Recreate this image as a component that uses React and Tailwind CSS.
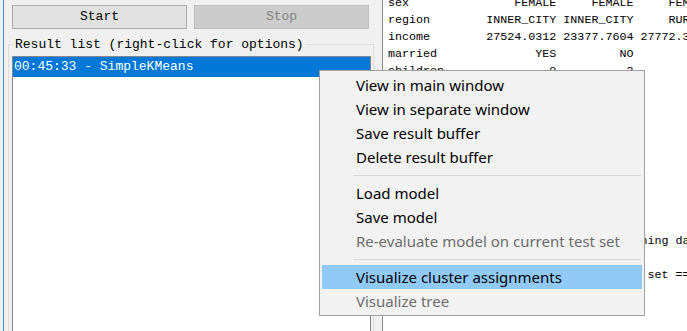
import React from 'react'

const MONO = { fontFamily: '"Liberation Mono", "DejaVu Sans Mono", monospace' }
const UI = { fontFamily: '"Noto Sans", "Open Sans", sans-serif' }

const OUTPUT = [
  'sex               FEMALE     FEMALE     FEMALE',
  'region        INNER_CITY INNER_CITY     RURAL',
  'income        27524.0312 23377.7604 27772.3808',
  'married              YES         NO',
  'children               0          2',
  '', '', '', '', '', '', '', '', '',
  'Time taken to build model (full training data) : 0.02 seconds',
  '',
  '=== Model and evaluation on training set ===',
]

const MENU = [
  { label: 'View in main window' },
  { label: 'View in separate window' },
  { label: 'Save result buffer' },
  { label: 'Delete result buffer' },
  { sep: true },
  { label: 'Load model' },
  { label: 'Save model' },
  { label: 'Re-evaluate model on current test set', disabled: true },
  { sep: true },
  { label: 'Visualize cluster assignments', active: true },
  { label: 'Visualize tree', disabled: true },
]

function ContextMenu() {
  return (
    <div className="absolute left-[319px] top-[70px] w-[326px] h-[246px] bg-[#f2f2f2] border border-[#a0a0a0] py-[2px] px-[2px]" style={UI}>
      {MENU.map((m, i) =>
        m.sep ? (
          <div key={i} className="h-[12px] flex items-center pl-[31px] pr-[1px]">
            <div className="h-px w-full bg-[#d7d7d7]" />
          </div>
        ) : (
          <div
            key={i}
            className={
              'h-[24px] flex items-center pl-[34px] text-[15px] ' +
              (m.active ? 'bg-[#91c9f7] text-black' : m.disabled ? 'text-[#6d6d6d]' : 'text-black')
            }
          >
            {m.label}
          </div>
        )
      )}
    </div>
  )
}

export default function App() {
  return (
    <div className="relative w-[687px] h-[331px] overflow-hidden bg-[#f0f0f0] flex">
      {/* left side */}
      <div className="flex-none w-[382px] pl-[3px]">
        <div className="h-full border-l border-[#4a89c8] pl-[8px] pt-[5px]">
          <div className="flex gap-[7px]" style={MONO}>
            <button className="w-[175px] h-[24px] bg-[#e1e1e1] border border-[#adadad] text-[13px] text-black">Start</button>
            <button className="w-[175px] h-[24px] bg-[#cccccc] border border-[#bfbfbf] text-[13px] text-[#838383]">Stop</button>
          </div>

          {/* Result list group */}
          <div className="relative -ml-[4px] mt-[15px] w-[366px] h-[300px] border-t border-l border-r border-[#dcdcdc]">
            <span className="absolute -top-[7px] left-[4px] px-[2px] bg-[#f0f0f0] text-[13px] leading-[14px] text-black" style={MONO}>
              Result list (right-click for options)
            </span>
            <div className="ml-[3px] mt-[11px] w-[359px] h-[290px] border border-[#828790] bg-white">
              <div className="h-[20px] bg-[#0078d7] text-white text-[13px] leading-[20px] pl-[1px]" style={MONO}>
                00:45:33 - SimpleKMeans
              </div>
            </div>
          </div>
        </div>
      </div>

      {/* output panel */}
      <div className="flex-1 border-l border-[#828790] bg-white overflow-hidden pl-[5px]">
        <pre className="-mt-[5.5px] text-[11.7px] leading-[17px] text-black whitespace-pre" style={MONO}>
          {OUTPUT.join('\n')}
        </pre>
      </div>

      <ContextMenu />
    </div>
  )
}
